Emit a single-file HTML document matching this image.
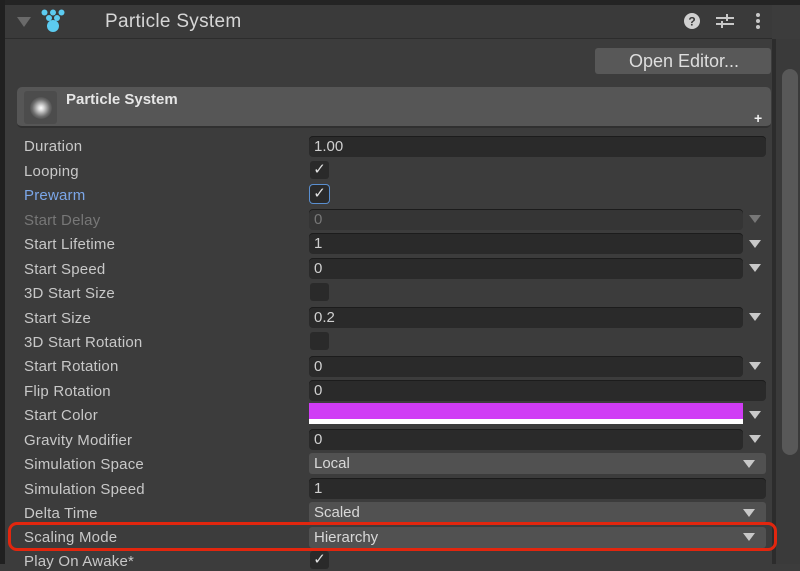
<!DOCTYPE html>
<html><head><meta charset="utf-8"><style>
*{margin:0;padding:0;box-sizing:border-box}
body{width:800px;height:564px;overflow:hidden;background:#3c3c3c;font-family:"Liberation Sans",sans-serif;position:relative}
.a{position:absolute}
.lbl{position:absolute;left:24px;font-size:15px;color:#c8c8c8;line-height:18px;letter-spacing:0.2px;margin-top:1px}
.f{position:absolute;left:309px;height:21px;background:#2a2a2a;border-radius:4px;color:#d0d0d0;font-size:15px;line-height:21px;padding-left:5px;box-shadow:inset 0 1px 0 #1c1c1c}
.p{position:absolute;left:309px;width:457px;height:21px;background:#515151;border-radius:3px;color:#d8d8d8;font-size:15px;line-height:21px;padding-left:5px}
.tri{position:absolute;width:0;height:0;border-left:6px solid transparent;border-right:6px solid transparent;border-top:8px solid #c8c8c8}
.cb{position:absolute;left:310px;width:19px;height:18px;background:#2a2a2a;border-radius:3px;color:#e0e0e0;font-size:15px;line-height:18px;text-align:center}
</style></head><body>
<div class="a" style="left:0;top:0;width:800px;height:5px;background:#242424"></div>
<div class="a" style="left:0;top:0;width:5px;height:564px;background:#202020"></div>
<div class="a" style="left:5px;top:5px;width:767px;height:34px;background:#3a3a3a;border-bottom:1px solid #2c2c2c"></div>
<div class="tri" style="left:17px;top:17px;border-top-color:#6a6a6a;border-left-width:7px;border-right-width:7px;border-top-width:10px"></div>
<svg class="a" style="left:41px;top:9px" width="24" height="24" viewBox="0 0 24 24"><g fill="#5ccbf0"><circle cx="3.5" cy="3.5" r="3"/><circle cx="12" cy="3.5" r="3"/><circle cx="20.5" cy="3.5" r="3"/><circle cx="8" cy="9" r="3"/><circle cx="16" cy="9" r="3"/><circle cx="12" cy="17" r="6"/></g></svg>
<div class="a" style="left:105px;top:11px;font-size:19px;color:#d6d6d6;letter-spacing:0.3px">Particle System</div>
<svg class="a" style="left:684px;top:13px" width="16" height="16" viewBox="0 0 16 16"><circle cx="8" cy="8" r="8" fill="#d0d0d0"/><text x="8" y="12.5" font-size="12" font-weight="bold" text-anchor="middle" fill="#3a3a3a" font-family="Liberation Sans">?</text></svg>
<svg class="a" style="left:716px;top:13px" width="18" height="16" viewBox="0 0 18 16"><g stroke="#c8c8c8" stroke-width="2"><line x1="0" y1="5" x2="18" y2="5"/><line x1="0" y1="11" x2="18" y2="11"/><line x1="11" y1="1" x2="11" y2="8"/><line x1="6" y1="8" x2="6" y2="15"/></g></svg>
<svg class="a" style="left:755px;top:12px" width="6" height="18"><g fill="#c8c8c8"><circle cx="3" cy="3" r="2"/><circle cx="3" cy="9" r="2"/><circle cx="3" cy="15" r="2"/></g></svg>
<div class="a" style="left:595px;top:48px;width:176px;height:26px;background:#585858;border-radius:3px;color:#dedede;font-size:18px;line-height:26px;text-align:center;padding-left:2px">Open Editor...</div>
<div class="a" style="left:772px;top:39px;width:4px;height:525px;background:#2c2c2c"></div>
<div class="a" style="left:776px;top:39px;width:24px;height:525px;background:#3a3a3a"></div>
<div class="a" style="left:782px;top:69px;width:16px;height:386px;background:#585858;border-radius:8px"></div>
<div class="a" style="left:17px;top:87px;width:754px;height:41px;background:#565656;border-radius:5px;border-bottom:2px solid #303030"></div>
<div class="a" style="left:24px;top:91px;width:33px;height:33px;background:#4c4c4c;border-radius:3px"></div>
<div class="a" style="left:30px;top:97px;width:22px;height:22px;border-radius:50%;background:radial-gradient(circle,#ffffff 0,#d8d8d8 18%,rgba(160,160,160,0.4) 55%,rgba(80,80,80,0) 75%)"></div>
<div class="a" style="left:66px;top:91px;font-size:15px;font-weight:bold;color:#e6e6e6">Particle System</div>
<div class="a" style="left:754px;top:110px;font-size:14px;font-weight:bold;color:#f0f0f0">+</div>

<div class="lbl" style="top:137px">Duration</div>
<div class="f" style="top:136px;width:457px">1.00</div>
<div class="lbl" style="top:162px">Looping</div>
<div class="cb" style="top:161px">✓</div>
<div class="lbl" style="top:186px;color:#7ba6e8">Prewarm</div>
<div class="cb" style="top:185px;box-shadow:0 0 0 1px #5a8fd0">✓</div>
<div class="lbl" style="top:211px;color:#777">Start Delay</div>
<div class="f" style="top:209px;width:434px;background:#353535;color:#777">0</div><div class="tri" style="left:749px;top:215px;border-top-color:#777"></div>
<div class="lbl" style="top:235px">Start Lifetime</div>
<div class="f" style="top:233px;width:434px">1</div><div class="tri" style="left:749px;top:240px"></div>
<div class="lbl" style="top:260px">Start Speed</div>
<div class="f" style="top:258px;width:434px">0</div><div class="tri" style="left:749px;top:264px"></div>
<div class="lbl" style="top:284px">3D Start Size</div>
<div class="cb" style="top:283px"></div>
<div class="lbl" style="top:309px">Start Size</div>
<div class="f" style="top:307px;width:434px">0.2</div><div class="tri" style="left:749px;top:313px"></div>
<div class="lbl" style="top:333px">3D Start Rotation</div>
<div class="cb" style="top:332px"></div>
<div class="lbl" style="top:357px">Start Rotation</div>
<div class="f" style="top:356px;width:434px">0</div><div class="tri" style="left:749px;top:362px"></div>
<div class="lbl" style="top:382px">Flip Rotation</div>
<div class="f" style="top:380px;width:457px">0</div>
<div class="lbl" style="top:406px">Start Color</div>
<div class="a" style="left:309px;top:403px;width:434px;height:16px;background:#d03cf5"></div>
<div class="a" style="left:309px;top:419px;width:434px;height:5px;background:#fff"></div>
<div class="tri" style="left:749px;top:411px"></div>
<div class="lbl" style="top:431px">Gravity Modifier</div>
<div class="f" style="top:429px;width:434px">0</div><div class="tri" style="left:749px;top:435px"></div>
<div class="lbl" style="top:455px">Simulation Space</div>
<div class="p" style="top:453px">Local</div><div class="tri" style="left:743px;top:460px"></div>
<div class="lbl" style="top:480px">Simulation Speed</div>
<div class="f" style="top:478px;width:457px">1</div>
<div class="lbl" style="top:504px">Delta Time</div>
<div class="p" style="top:502px">Scaled</div><div class="tri" style="left:743px;top:509px"></div>
<div class="lbl" style="top:528px">Scaling Mode</div>
<div class="p" style="top:527px">Hierarchy</div><div class="tri" style="left:743px;top:533px"></div>
<div class="lbl" style="top:552px">Play On Awake*</div>
<div class="cb" style="top:551px">✓</div>
<div class="a" style="left:8px;top:522px;width:769px;height:29px;border:3px solid #e2260e;border-radius:9px"></div>
</body></html>
